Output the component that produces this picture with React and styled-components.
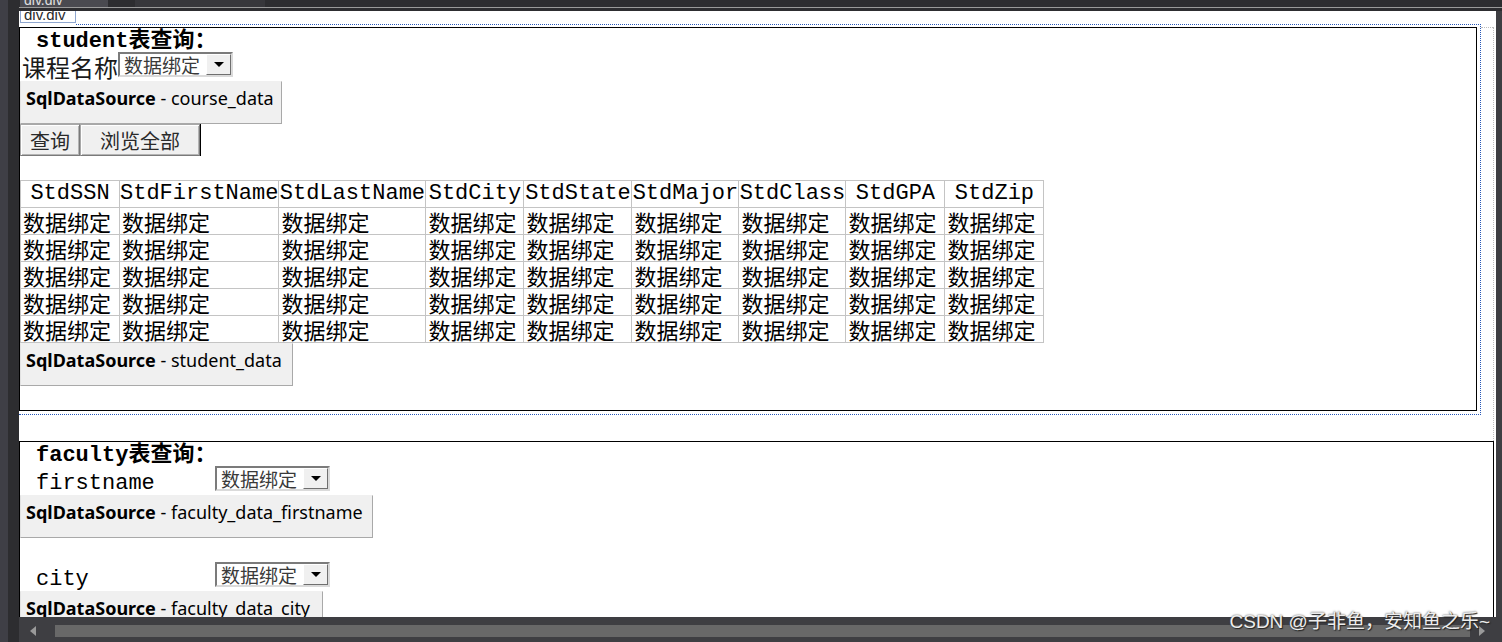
import React from 'react';
import styled, { createGlobalStyle } from 'styled-components';

const MONO = '"Liberation Mono", "Noto Sans CJK SC", monospace';
const CJK = '"Noto Sans CJK SC", sans-serif';
const UI = '"Noto Sans", "Noto Sans CJK SC", sans-serif';

const columns = [
  { name: 'StdSSN', width: 99 },
  { name: 'StdFirstName', width: 159 },
  { name: 'StdLastName', width: 147 },
  { name: 'StdCity', width: 98 },
  { name: 'StdState', width: 108 },
  { name: 'StdMajor', width: 107 },
  { name: 'StdClass', width: 107 },
  { name: 'StdGPA', width: 99 },
  { name: 'StdZip', width: 99 },
];
const rows = [1, 2, 3, 4, 5];

function DropDown() {
  return (
    <Select>
      <span>数据绑定</span>
      <DropButton><Caret /></DropButton>
    </Select>
  );
}

function DataSource({ width, name, flush }) {
  return (
    <SourceBox $width={width} $flush={flush}>
      <b>SqlDataSource</b> - {name}
    </SourceBox>
  );
}

export default function App() {
  return (
    <>
      <GlobalStyle />
      <Window>
        <LeftGutter />
        <Main>
          <TopBar>
            <TabStrip>
              <Tab $width={88}>div.div</Tab>
              <Tab $width={130} $dim />
            </TabStrip>
            <TopRule />
          </TopBar>
          <Body>
            <Canvas>
              <Surface>
                <StudentRow>
                  <SelectionFrame>
                    <TagCover><Tag>div.div</Tag></TagCover>
                    <Panel $height={384}>
                      <Title>student表查询：</Title>
                      <CourseRow>
                        <CourseLabel>课程名称</CourseLabel>
                        <DropDown />
                      </CourseRow>
                      <DataSource width={262} name="course_data" />
                      <ButtonRow>
                        <Button $width={60}>查询</Button>
                        <Button $width={120}>浏览全部</Button>
                      </ButtonRow>
                      <Grid>
                        <colgroup>
                          {columns.map((c) => <Col key={c.name} $width={c.width} />)}
                        </colgroup>
                        <thead>
                          <tr>
                            {columns.map((c) => <HeadCell key={c.name}>{c.name}</HeadCell>)}
                          </tr>
                        </thead>
                        <tbody>
                          {rows.map((r) => (
                            <tr key={r}>
                              {columns.map((c) => <Cell key={c.name}>数据绑定</Cell>)}
                            </tr>
                          ))}
                        </tbody>
                      </Grid>
                      <DataSource width={273} name="student_data" flush />
                    </Panel>
                  </SelectionFrame>
                  <SurfaceEdge />
                </StudentRow>
                <Panel $faculty>
                  <Title>faculty表查询：</Title>
                  <FieldRow>
                    <FieldLabel>firstname</FieldLabel>
                    <DropDown />
                  </FieldRow>
                  <DataSource width={353} name="faculty_data_firstname" />
                  <BlankLine />
                  <FieldRow>
                    <FieldLabel>city</FieldLabel>
                    <DropDown />
                  </FieldRow>
                  <DataSource width={303} name="faculty_data_city" />
                </Panel>
              </Surface>
            </Canvas>
            <RightStrip />
          </Body>
          <ScrollBar>
            <Arrow $dir="left" />
            <Thumb />
            <Arrow $dir="right" />
          </ScrollBar>
        </Main>
        <Watermark>CSDN @子非鱼，安知鱼之乐~</Watermark>
      </Window>
    </>
  );
}

const GlobalStyle = createGlobalStyle`
  html, body {
    margin: 0;
    padding: 0;
    background: #fff;
    overflow: hidden;
  }
`;

const Window = styled.div`
  position: relative;
  display: flex;
  width: 1502px;
  height: 642px;
  overflow: hidden;
  background: #3e3e42;
`;

const LeftGutter = styled.div`
  flex: none;
  width: 19px;
  background: linear-gradient(to right, #3f3f46 0 8px, #2d2d30 8px);
`;

const Main = styled.div`
  flex: 1;
  display: flex;
  flex-direction: column;
  min-width: 0;
`;

const TopBar = styled.div`
  flex: none;
  height: 11px;
  background: #2d2d30;
`;

const TabStrip = styled.div`
  display: flex;
  gap: 27px;
  height: 7px;
  padding-left: 1px;
  overflow: hidden;
`;

const Tab = styled.div`
  width: ${(p) => p.$width}px;
  height: 7px;
  background: ${(p) => (p.$dim ? '#37373b' : '#4a4a50')};
  color: #e0e0e0;
  font: 14px "Liberation Sans", sans-serif;
  line-height: 0px;
  padding-left: 4px;
  box-sizing: border-box;
  overflow: hidden;
`;

const TopRule = styled.div`
  height: 1px;
  background: #9a9a9a;
`;

const Body = styled.div`
  flex: 1;
  display: flex;
  min-height: 0;
`;

const Canvas = styled.div`
  flex: 1;
  background: #fff;
  overflow: hidden;
  padding-top: 16px;
  box-sizing: border-box;
`;

const RightStrip = styled.div`
  flex: none;
  width: 6px;
  background: #3e3e42;
`;

const Surface = styled.div`
  width: 1475px;
  height: 700px;
  box-sizing: border-box;
  border-right: 1px dotted #bdbdbd;
`;

const StudentRow = styled.div`
  display: flex;
  align-items: flex-start;
`;

const SurfaceEdge = styled.div`
  flex: 1;
  border-top: 1px dotted #bdbdbd;
`;

const SelectionFrame = styled.div`
  position: relative;
  flex: none;
  width: 1462px;
  margin-top: -3px;
  box-sizing: border-box;
  border: 1px dotted #2858b8;
  border-left: none;
  padding: 2px 3px 3px 0;
`;

const TagCover = styled.div`
  position: absolute;
  top: -14px;
  left: 0;
  width: 57px;
  height: 15px;
  background: #fff;
`;

const Tag = styled.div`
  margin-left: 1px;
  width: 56px;
  height: 12px;
  box-sizing: border-box;
  border: 1px solid #8ea6cf;
  border-top: none;
  padding-left: 3px;
  font: 15px "Liberation Sans", sans-serif;
  line-height: 7px;
  color: #2a2a2a;
  overflow: hidden;
`;

const Panel = styled.div`
  box-sizing: border-box;
  border: 1px solid #000;
  height: ${(p) => (p.$faculty ? '240px' : `${p.$height}px`)};
  width: ${(p) => (p.$faculty ? '1475px' : 'auto')};
  margin-top: ${(p) => (p.$faculty ? '26px' : '0')};
  background: #fff;
`;

const Title = styled.div`
  height: 24px;
  padding-left: 16px;
  font: bold 22px ${MONO};
  line-height: 28px;
  white-space: nowrap;
`;

const CourseRow = styled.div`
  display: flex;
  align-items: flex-start;
  height: 25px;
  padding-left: 2px;
`;

const CourseLabel = styled.span`
  font: 24px ${CJK};
  line-height: 28px;
  height: 25px;
  margin-top: 1px;
  color: #1a1a1a;
`;

const Select = styled.div`
  display: flex;
  align-items: center;
  justify-content: space-between;
  width: 115px;
  height: 25px;
  box-sizing: border-box;
  border: 2px solid;
  border-color: #7b7b7b #dadada #dadada #7b7b7b;
  padding-left: 4px;
  background: #fff;
  font: 19px ${CJK};
  line-height: 21px;
  color: #3a3a3a;
  white-space: nowrap;
`;

const DropButton = styled.div`
  display: flex;
  align-items: center;
  justify-content: center;
  width: 25px;
  height: 21px;
  box-sizing: border-box;
  border: 1px solid;
  border-color: #fff #6f6f6f #6f6f6f #fff;
  background: #f0f0f0;
`;

const Caret = styled.div`
  width: 0;
  height: 0;
  border-left: 5px solid transparent;
  border-right: 5px solid transparent;
  border-top: 5px solid #000;
`;

const SourceBox = styled.div`
  width: ${(p) => p.$width}px;
  height: 43px;
  box-sizing: border-box;
  margin-top: ${(p) => (p.$flush ? '0' : '4px')};
  border: 1px solid;
  border-color: #f0f0f0 #a9a9a9 #a9a9a9 #e2e2e2;
  background: #f0f0f0;
  padding: 2px 0 0 5px;
  font: 18px ${UI};
  line-height: 28px;
  color: #000;
  white-space: nowrap;
  overflow: hidden;

  b {
    font-weight: bold;
  }
`;

const ButtonRow = styled.div`
  display: flex;
  width: fit-content;
  border-right: 1px solid #000;
`;

const Button = styled.button`
  width: ${(p) => p.$width}px;
  height: 32px;
  box-sizing: border-box;
  margin: 0;
  padding: 0;
  border: 1px solid;
  border-color: #a8a8a8 #7a7a7a #7a7a7a #a8a8a8;
  box-shadow: inset 1px 1px 0 #fff, inset -1px -1px 0 #b4b4b4;
  background: #f0f0f0;
  font: 20px ${CJK};
  color: #2a2a2a;
`;

const Grid = styled.table`
  margin-top: 24px;
  border-collapse: collapse;
  table-layout: fixed;
  font: 22px ${MONO};
  color: #000;
`;

const Col = styled.col`
  width: ${(p) => p.$width}px;
`;

const HeadCell = styled.th`
  height: 26px;
  padding: 0;
  border: 1px solid #c4c4c4;
  font-weight: normal;
  text-align: center;
  line-height: 26px;
  white-space: nowrap;
  overflow: hidden;
`;

const Cell = styled.td`
  height: 26px;
  padding: 0 0 0 2px;
  border: 1px solid #c4c4c4;
  font-family: ${CJK};
  line-height: 24px;
  white-space: nowrap;
  overflow: hidden;
`;

const FieldRow = styled.div`
  display: flex;
  align-items: flex-start;
  height: 25px;
`;

const FieldLabel = styled.div`
  width: 195px;
  box-sizing: border-box;
  padding: 5px 0 0 16px;
  font: 22px ${MONO};
  line-height: 25px;
`;

const BlankLine = styled.div`
  height: 24px;
`;

const ScrollBar = styled.div`
  flex: none;
  display: flex;
  align-items: flex-start;
  height: 25px;
  padding-left: 11px;
  background: #3e3e42;
`;

const Arrow = styled.div`
  width: 0;
  height: 0;
  margin-top: 9px;
  border-top: 5px solid transparent;
  border-bottom: 5px solid transparent;
  ${(p) =>
    p.$dir === 'left'
      ? 'border-right: 6px solid #9a9a9a; margin-right: 19px;'
      : 'border-left: 6px solid #9a9a9a; margin-left: 9px;'}
`;

const Thumb = styled.div`
  width: 1415px;
  height: 12px;
  margin-top: 8px;
  background: #686868;
`;

const Watermark = styled.div`
  position: absolute;
  right: 12px;
  bottom: 9px;
  font: 19px "Liberation Sans", "Noto Sans CJK SC", sans-serif;
  color: #ededed;
  text-shadow: 1px 1px 1px #222, 0 0 2px #444;
  white-space: nowrap;
`;
